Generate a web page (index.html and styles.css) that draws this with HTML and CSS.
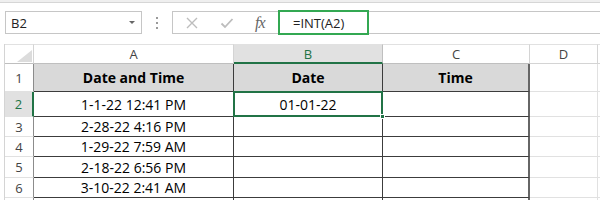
FILE: index.html
```html
<!DOCTYPE html>
<html lang="en">
<head>
    <meta charset="UTF-8">
    <meta name="viewport" content="width=device-width, initial-scale=1.0">
    <title>Excel INT Date</title>
    <link rel="stylesheet" href="styles.css">
</head>
<body>
    <div class="top-strip"></div>
    <div class="formula-bar">
        <div class="name-box">
            <span>B2</span>
            <span class="dropdown"></span>
        </div>
        <div class="dots">
            <span></span><span></span><span></span>
        </div>
        <div class="icon-box">
            <svg class="icon" width="14" height="14" viewBox="0 0 14 14">
                <path d="M2 2 L12 12 M12 2 L2 12" stroke="#bdbdbd" stroke-width="1.4" fill="none"/>
            </svg>
            <svg class="icon" width="14" height="14" viewBox="0 0 14 14">
                <path d="M1.5 7.5 L5 11 L12.5 3" stroke="#bdbdbd" stroke-width="1.8" fill="none"/>
            </svg>
            <span class="fx">fx</span>
        </div>
        <div class="formula-input">
            <div class="highlight"></div>
            <span class="formula-text">=INT(A2)</span>
        </div>
    </div>

    <div class="sheet">
        <div class="corner">
            <svg width="15" height="12" viewBox="0 0 15 12">
                <polygon points="15,0 15,12 0,12" fill="#dcdcdc"/>
            </svg>
        </div>
        <div class="col-head">A</div>
        <div class="col-head active">B</div>
        <div class="col-head">C</div>
        <div class="col-head plain">D</div>
        <div class="filler head"></div>

        <div class="row-head">1</div>
        <div class="cell title">Date and Time</div>
        <div class="cell title">Date</div>
        <div class="cell title last">Time</div>
        <div class="grid-cell"></div>
        <div class="filler"></div>

        <div class="row-head active">2</div>
        <div class="cell">1-1-22 12:41 PM</div>
        <div class="cell selected">01-01-22<span class="handle"></span></div>
        <div class="cell last"></div>
        <div class="grid-cell"></div>
        <div class="filler"></div>

        <div class="row-head">3</div>
        <div class="cell">2-28-22 4:16 PM</div>
        <div class="cell"></div>
        <div class="cell last"></div>
        <div class="grid-cell"></div>
        <div class="filler"></div>

        <div class="row-head">4</div>
        <div class="cell">1-29-22 7:59 AM</div>
        <div class="cell"></div>
        <div class="cell last"></div>
        <div class="grid-cell"></div>
        <div class="filler"></div>

        <div class="row-head">5</div>
        <div class="cell">2-18-22 6:56 PM</div>
        <div class="cell"></div>
        <div class="cell last"></div>
        <div class="grid-cell"></div>
        <div class="filler"></div>

        <div class="row-head">6</div>
        <div class="cell">3-10-22 2:41 AM</div>
        <div class="cell"></div>
        <div class="cell last"></div>
        <div class="grid-cell"></div>
        <div class="filler"></div>

        <div class="row-head"></div>
        <div class="cell"></div>
        <div class="cell"></div>
        <div class="cell last"></div>
        <div class="grid-cell"></div>
        <div class="filler"></div>
    </div>
</body>
</html>
```

FILE: styles.css
```css
body {
    margin: 0;
    width: 600px;
    height: 200px;
    overflow: hidden;
    background-color: #fff;
    font-family: "Open Sans", "Noto Sans", sans-serif;
    color: #000;
}

.top-strip {
    height: 2px;
    background-color: #efefef;
    border-bottom: 1px solid #d6d6d6;
}

.formula-bar {
    height: 41px;
    box-sizing: border-box;
    padding-top: 8px;
    display: flex;
    align-items: flex-start;
}

.name-box {
    margin-left: 5px;
    width: 137px;
    height: 23px;
    box-sizing: border-box;
    border: 1px solid #c6c6c6;
    display: flex;
    align-items: center;
    justify-content: space-between;
    padding: 0 6px 0 5px;
    font-size: 13px;
    color: #222;
}

.dropdown {
    width: 0;
    height: 0;
    border-left: 3px solid transparent;
    border-right: 3px solid transparent;
    border-top: 3px solid #666;
}

.dots {
    width: 30px;
    height: 23px;
    display: flex;
    flex-direction: column;
    align-items: center;
    justify-content: center;
    gap: 3px;
}

.dots span {
    width: 2px;
    height: 2px;
    background-color: #9a9a9a;
}

.icon-box {
    width: 106px;
    height: 23px;
    box-sizing: border-box;
    border: 1px solid #c6c6c6;
    border-right: none;
    display: flex;
    align-items: center;
    padding-left: 12px;
    gap: 21px;
}

.fx {
    font-family: "Liberation Serif", "DejaVu Serif", serif;
    font-style: italic;
    font-size: 16px;
    color: #666;
    letter-spacing: -1px;
}

.formula-input {
    position: relative;
    flex: 1;
    height: 23px;
    box-sizing: border-box;
    border: 1px solid #c6c6c6;
    border-right: none;
    display: flex;
    align-items: center;
    padding-left: 14px;
    font-size: 13px;
    color: #222;
}

.highlight {
    position: absolute;
    left: -1px;
    top: -2px;
    width: 91px;
    height: 25px;
    box-sizing: border-box;
    border: 2px solid #33a852;
}

.sheet {
    display: grid;
    grid-template-columns: 29px 200px 149px 147px 68px 3px;
    grid-template-rows: 20px 28px 25px 20px 20px 21px 20px 20px;
    margin-left: 4px;
    border-left: 1px solid #d4d4d4;
    width: 596px;
    box-sizing: border-box;
}

.corner {
    border-right: 1px solid #d4d4d4;
    border-bottom: 1px solid #bfbfbf;
    border-top: 1px solid #e1e1e1;
    display: flex;
    align-items: flex-end;
    justify-content: flex-end;
    padding: 0 1px 1px 0;
}

.col-head {
    border-top: 1px solid #e1e1e1;
    border-right: 1px solid #d4d4d4;
    border-bottom: 1px solid #bfbfbf;
    display: flex;
    align-items: center;
    justify-content: center;
    font-size: 13px;
    color: #444;
}

.col-head.active {
    background-color: #e1e1e1;
    color: #217346;
    border-right-color: #bfbfbf;
    border-bottom: 2px solid #217346;
}

.col-head.plain {
    border-bottom-color: #d4d4d4;
}

.filler {
    border-bottom: 1px solid #e1e1e1;
}

.filler.head {
    border-top: 1px solid #e1e1e1;
    border-bottom-color: #d4d4d4;
}

.row-head {
    border-right: 1px solid #8c8c8c;
    border-bottom: 1px solid #e1e1e1;
    display: flex;
    align-items: center;
    justify-content: center;
    font-size: 13px;
    color: #444;
}

.row-head.active {
    background-color: #e1e1e1;
    color: #217346;
    border-right: 2px solid #217346;
}

.cell {
    border-right: 1px solid #3c3c3c;
    border-bottom: 1px solid #3c3c3c;
    display: flex;
    align-items: center;
    justify-content: center;
    font-size: 14px;
    position: relative;
}

.cell.title {
    background-color: #d9d9d9;
    font-weight: bold;
}

.cell.last {
    border-right: 2px solid #666;
}

.cell.selected::after {
    content: "";
    position: absolute;
    left: -1px;
    top: -1px;
    right: -1px;
    bottom: -1px;
    border: 2px solid #217346;
}

.handle {
    position: absolute;
    right: -3px;
    bottom: -3px;
    width: 5px;
    height: 5px;
    background-color: #217346;
    border: 1px solid #fff;
    box-sizing: border-box;
    z-index: 1;
}

.grid-cell {
    border-right: 1px solid #e1e1e1;
    border-bottom: 1px solid #e1e1e1;
}
```
